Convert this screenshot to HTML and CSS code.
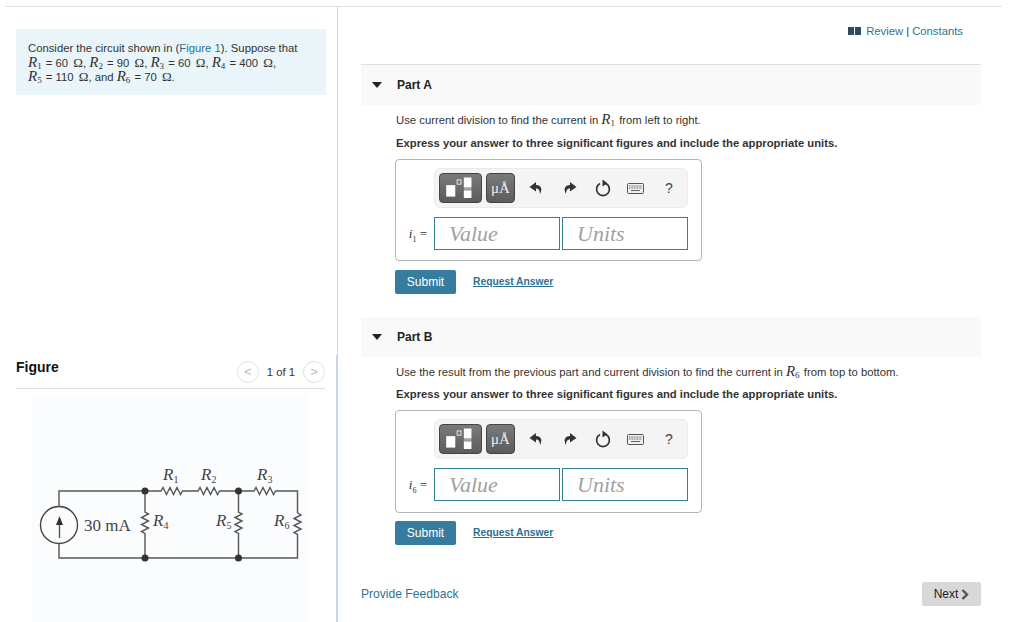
FILE: index.html
```html
<!DOCTYPE html>
<html lang="en">
<head>
  <meta charset="UTF-8" />
  <meta name="viewport" content="width=device-width, initial-scale=1.0"/>
  <title>Part A and Part B</title>
  <link rel="stylesheet" href="styles.css">
</head>
<body>
  <svg class="sprites" width="0" height="0" aria-hidden="true">
    <symbol id="ico-templates" viewBox="0 0 43 30">
      <rect x="6.5" y="12" width="9.5" height="12" fill="#fff"/>
      <rect x="18" y="6.5" width="4" height="4.5" fill="none" stroke="#eee" stroke-width="1"/>
      <rect x="25" y="4" width="8" height="10.5" fill="#fff"/>
      <rect x="25" y="15.5" width="8" height="1" fill="#ddd"/>
      <rect x="25" y="17.5" width="8" height="8" fill="#fff"/>
    </symbol>
    <symbol id="ico-undo" viewBox="0 0 14 14">
      <path d="M7 1 L0.5 6 L7 10.5 V7.6 C9.6 7.6 10.8 9.2 11 13 C13.6 8.2 12.4 4.2 7 4 Z" fill="#333"/>
    </symbol>
    <symbol id="ico-redo" viewBox="0 0 14 14">
      <path d="M7 1 L13.5 6 L7 10.5 V7.6 C4.4 7.6 3.2 9.2 3 13 C0.4 8.2 1.6 4.2 7 4 Z" fill="#333"/>
    </symbol>
    <symbol id="ico-reset" viewBox="0 0 16 18">
      <path d="M5 4.6 A6.4 6.4 0 1 0 11 4.6" fill="none" stroke="#333" stroke-width="1.7"/>
      <path d="M7.5 0.5 L12.5 4.2 L7.5 7.5 Z" fill="#333"/>
    </symbol>
    <symbol id="ico-keyboard" viewBox="0 0 17 11">
      <rect x="0.5" y="0.5" width="16" height="10" rx="1" fill="#eee" stroke="#555"/>
      <path d="M2 3h13M2 5h13" stroke="#666" stroke-width="1" stroke-dasharray="1 .6"/>
      <path d="M4 7.5h9" stroke="#666" stroke-width="1"/>
    </symbol>
  </svg>

  <div class="page">
    <aside class="left-col">
      <div class="intro">
        <div class="intro-box">
          Consider the circuit shown in (<a class="link" href="#">Figure 1</a>). Suppose that<br>
          <span class="m">R<sub>1</sub></span> = 60 <span class="m-u">Ω</span>, <span class="m">R<sub>2</sub></span> = 90 <span class="m-u">Ω</span>, <span class="m">R<sub>3</sub></span> = 60 <span class="m-u">Ω</span>, <span class="m">R<sub>4</sub></span> = 400 <span class="m-u">Ω</span>,<br>
          <span class="m">R<sub>5</sub></span> = 110 <span class="m-u">Ω</span>, and <span class="m">R<sub>6</sub></span> = 70 <span class="m-u">Ω</span>.
        </div>
      </div>

      <section class="figure">
        <div class="figure-head">
          <h2>Figure</h2>
          <div class="pager">
            <span class="pager-btn">&lt;</span>
            <span class="pager-count">1 of 1</span>
            <span class="pager-btn">&gt;</span>
          </div>
        </div>
        <div class="figure-img">
          <svg class="circuit" width="276" height="227" viewBox="32 395 276 227">
            <g fill="none" stroke="#555" stroke-width="1.4">
              <path d="M59 506.5 V491 H161 l2 -3.5 l3.5 7 l3.5 -7 l3.5 7 l3.5 -7 l3.5 7 l2 -3.5 H198 l2 -3.5 l3.5 7 l3.5 -7 l3.5 7 l3.5 -7 l3.5 7 l2 -3.5 H254 l2 -3.5 l3.5 7 l3.5 -7 l3.5 7 l3.5 -7 l3.5 7 l2 -3.5 H297.5 V513"/>
              <path d="M297.5 513 l3.5 2 l-7 3.5 l7 3.5 l-7 3.5 l7 3.5 l-7 3.5 l3.5 2 V558 H59 V543.5"/>
              <path d="M145 491 V512 l3.5 2 l-7 3.5 l7 3.5 l-7 3.5 l7 3.5 l-7 3.5 l3.5 2 V558"/>
              <path d="M238.5 491 V512 l3.5 2 l-7 3.5 l7 3.5 l-7 3.5 l7 3.5 l-7 3.5 l3.5 2 V558"/>
              <circle cx="59" cy="525" r="18.5" stroke="#444"/>
              <path d="M59.5 538 V520"/>
            </g>
            <path d="M59.5 516 L63 525 H56 Z" fill="#333"/>
            <g fill="#333">
              <circle cx="145" cy="491" r="3.5"/>
              <circle cx="145" cy="558" r="3.5"/>
              <circle cx="238.5" cy="491" r="3.5"/>
              <circle cx="238.5" cy="558" r="3.5"/>
            </g>
            <g class="circuit-text">
              <text x="84" y="531">30 mA</text>
              <text class="r" x="163" y="480">R<tspan class="r-sub" dy="3">1</tspan></text>
              <text class="r" x="201" y="480">R<tspan class="r-sub" dy="3">2</tspan></text>
              <text class="r" x="257" y="480">R<tspan class="r-sub" dy="3">3</tspan></text>
              <text class="r" x="153" y="526">R<tspan class="r-sub" dy="3">4</tspan></text>
              <text class="r" x="216" y="526">R<tspan class="r-sub" dy="3">5</tspan></text>
              <text class="r" x="274" y="526">R<tspan class="r-sub" dy="3">6</tspan></text>
            </g>
          </svg>
        </div>
      </section>
    </aside>

    <main class="right-col">
      <div class="review">
        <svg class="book" width="13" height="8" viewBox="0 0 13 8"><path d="M0 0h6v8H0zM7 0h6v8H7z" fill="#2b4a66"/></svg>
        <a class="link" href="#">Review</a> | <a class="link" href="#">Constants</a>
      </div>

      <section class="part part-a">
        <header class="part-head"><span class="caret"></span><h3>Part A</h3></header>
        <div class="part-body">
          <p class="prompt">Use current division to find the current in <span class="m">R<sub>1</sub></span> from left to right.</p>
          <p class="prompt strong">Express your answer to three significant figures and include the appropriate units.</p>
          <div class="answer">
            <div class="toolbar">
              <span class="tool tool-wide"><svg width="43" height="30"><use href="#ico-templates"/></svg></span>
              <span class="tool tool-units">μÅ</span>
              <svg class="ico ico-undo" width="14" height="14"><use href="#ico-undo"/></svg>
              <svg class="ico ico-redo" width="14" height="14"><use href="#ico-redo"/></svg>
              <svg class="ico ico-reset" width="16" height="18"><use href="#ico-reset"/></svg>
              <svg class="ico ico-keys" width="17" height="11"><use href="#ico-keyboard"/></svg>
              <span class="ico-help">?</span>
            </div>
            <div class="inputs">
              <span class="var"><i>i</i><sub>1</sub> =</span>
              <span class="field">Value</span>
              <span class="field">Units</span>
            </div>
          </div>
          <div class="actions">
            <button class="submit">Submit</button>
            <a class="request" href="#">Request Answer</a>
          </div>
        </div>
      </section>

      <section class="part part-b">
        <header class="part-head"><span class="caret"></span><h3>Part B</h3></header>
        <div class="part-body">
          <p class="prompt">Use the result from the previous part and current division to find the current in <span class="m">R<sub>6</sub></span> from top to bottom.</p>
          <p class="prompt strong">Express your answer to three significant figures and include the appropriate units.</p>
          <div class="answer">
            <div class="toolbar">
              <span class="tool tool-wide"><svg width="43" height="30"><use href="#ico-templates"/></svg></span>
              <span class="tool tool-units">μÅ</span>
              <svg class="ico ico-undo" width="14" height="14"><use href="#ico-undo"/></svg>
              <svg class="ico ico-redo" width="14" height="14"><use href="#ico-redo"/></svg>
              <svg class="ico ico-reset" width="16" height="18"><use href="#ico-reset"/></svg>
              <svg class="ico ico-keys" width="17" height="11"><use href="#ico-keyboard"/></svg>
              <span class="ico-help">?</span>
            </div>
            <div class="inputs">
              <span class="var"><i>i</i><sub>6</sub> =</span>
              <span class="field">Value</span>
              <span class="field">Units</span>
            </div>
          </div>
          <div class="actions">
            <button class="submit">Submit</button>
            <a class="request" href="#">Request Answer</a>
          </div>
        </div>
      </section>

      <footer class="foot">
        <a class="link feedback" href="#">Provide Feedback</a>
        <button class="next">Next<svg class="next-arrow" width="8" height="11" viewBox="0 0 8 11"><path d="M1.5 1 L6 5.5 L1.5 10" fill="none" stroke="#555" stroke-width="2.4"/></svg></button>
      </footer>
    </main>
  </div>
</body>
</html>
```

FILE: styles.css
```css
html, body {
  height: 100%;
}
body {
  margin: 0;
  overflow: hidden;
  background: #fff;
  color: #333;
  font-family: "Liberation Sans", Arial, sans-serif;
  font-size: 11.3px;
}
.sprites {
  display: block;
  height: 0;
}
.link {
  color: #2c7391;
  text-decoration: none;
}
.page {
  display: flex;
  width: 997px;
  height: 616px;
  margin: 6px 0 0 5px;
  border-top: 1px solid #e0e0e0;
}

/* left column */
.left-col {
  display: flex;
  flex-direction: column;
  flex: 0 0 333px;
}
.intro {
  box-sizing: border-box;
  flex: 0 0 348px;
  padding: 22px 11px 0;
  border-right: 1px solid #d8d8d8;
}
.intro-box {
  box-sizing: border-box;
  height: 66px;
  padding: 13px 12px 0;
  background: #e9f5f8;
  line-height: 13.5px;
}
.m {
  margin-right: 1px;
  font-family: "Liberation Serif", serif;
  font-style: italic;
  font-size: 15px;
}
.m sub {
  vertical-align: -2px;
  font-style: normal;
  font-size: 9px;
  line-height: 0;
}
.m-u {
  margin-left: 2px;
  font-family: "Liberation Serif", serif;
  font-size: 13px;
}
.figure {
  flex: 1;
  padding: 0 11px;
  border-right: 2px solid #c8d5e8;
}
.figure-head {
  display: flex;
  align-items: center;
  justify-content: space-between;
  height: 33px;
  border-bottom: 1px solid #ddd;
}
.figure-head h2 {
  margin: 0 0 10px;
  color: #111;
  font-size: 14px;
}
.pager {
  display: flex;
  align-items: center;
  gap: 8px;
}
.pager-btn {
  box-sizing: border-box;
  width: 22px;
  height: 22px;
  border: 1px solid #e2e2e2;
  border-radius: 50%;
  color: #bbb;
  font-size: 13px;
  line-height: 19px;
  text-align: center;
}
.figure-img {
  width: 276px;
  height: 227px;
  margin: 6px 0 0 16px;
  background: #fbfcfd;
}
.circuit {
  display: block;
}
.circuit-text {
  font-family: "Liberation Serif", serif;
  font-size: 17px;
  fill: #444;
}
.circuit-text .r {
  font-style: italic;
}
.r-sub {
  font-size: 10px;
  font-style: normal;
}

/* right column */
.right-col {
  flex: 0 0 620px;
  padding-left: 23px;
}
.review {
  display: flex;
  align-items: center;
  justify-content: flex-end;
  gap: 3px;
  height: 57px;
  padding: 0 18px 10px 0;
  box-sizing: border-box;
}
.book {
  margin-right: 2px;
}
.part {
  margin-bottom: 23px;
}
.part-head {
  display: flex;
  align-items: center;
  box-sizing: border-box;
  height: 40px;
  padding-left: 11px;
  background: #f9f9f9;
}
.part-a .part-head {
  height: 41px;
  border-top: 1px solid #e0e0e0;
}
.part-head h3 {
  margin: 0 0 0 15px;
  color: #222;
  font-size: 12px;
}
.caret {
  width: 0;
  height: 0;
  border-left: 5px solid transparent;
  border-right: 5px solid transparent;
  border-top: 6px solid #222;
}
.part-body {
  padding-left: 34px;
}
.prompt {
  margin: 0;
  padding: 7px 0 0 1px;
  line-height: 15px;
}
.strong {
  font-weight: bold;
  font-size: 11.25px;
}
.part-a .strong {
  padding-top: 8px;
}
.answer {
  box-sizing: border-box;
  width: 307px;
  height: 102px;
  margin-top: 8px;
  padding: 8px 13px 0 38px;
  border: 1px solid #b5b5b5;
  border-radius: 4px;
}
.part-b .answer {
  height: 103px;
}
.toolbar {
  display: flex;
  align-items: center;
  box-sizing: border-box;
  width: 254px;
  height: 40px;
  padding-left: 4px;
  background: #f4f4f4;
  border: 1px solid #eaeaea;
  border-radius: 6px;
}
.tool {
  display: flex;
  align-items: center;
  justify-content: center;
  box-sizing: border-box;
  height: 30px;
  border: 1px solid #444;
  border-radius: 4px;
  background: linear-gradient(#7a7a7a, #5c5c5c);
  color: #eee;
}
.tool-wide {
  width: 43px;
  margin-right: 4px;
}
.tool-units {
  width: 29px;
  font-family: "Liberation Serif", serif;
  font-size: 15px;
}
.ico {
  display: block;
  flex: none;
}
.ico-undo {
  margin-left: 14px;
}
.ico-redo {
  margin-left: 20px;
}
.ico-reset {
  margin-left: 18px;
}
.ico-keys {
  margin-left: 16px;
}
.ico-help {
  margin-left: 21px;
  color: #444;
  font-size: 14px;
}
.inputs {
  display: flex;
  align-items: center;
  gap: 2px;
  margin: 9px 0 0 -38px;
}
.var {
  flex: 0 0 36px;
  padding-right: 5px;
  box-sizing: border-box;
  font-family: "Liberation Serif", serif;
  font-size: 13px;
  text-align: right;
}
.var sub {
  font-size: 8px;
  line-height: 0;
}
.field {
  box-sizing: border-box;
  width: 126px;
  height: 33px;
  padding-left: 14px;
  border: 1px solid #2f7f9f;
  color: #a0a0a0;
  font-family: "Liberation Serif", serif;
  font-size: 22px;
  font-style: italic;
  line-height: 31px;
}
.actions {
  display: flex;
  align-items: center;
  gap: 17px;
  margin-top: 9px;
}
.part-b .actions {
  margin-top: 8px;
}
.submit {
  width: 61px;
  height: 24px;
  padding: 0;
  border: none;
  border-radius: 2px;
  background: #357c9e;
  color: #fff;
  font-family: inherit;
  font-size: 12px;
}
.request {
  margin-bottom: 2px;
  color: #2c7391;
  font-size: 10.3px;
  font-weight: bold;
}
.foot {
  display: flex;
  align-items: center;
  justify-content: space-between;
  margin-top: 37px;
}
.feedback {
  font-size: 12.1px;
}
.next {
  display: flex;
  align-items: center;
  justify-content: center;
  gap: 3px;
  width: 59px;
  height: 24px;
  padding: 0;
  border: none;
  border-radius: 2px;
  background: #d8d8d8;
  color: #222;
  font-family: inherit;
  font-size: 12px;
}
```
